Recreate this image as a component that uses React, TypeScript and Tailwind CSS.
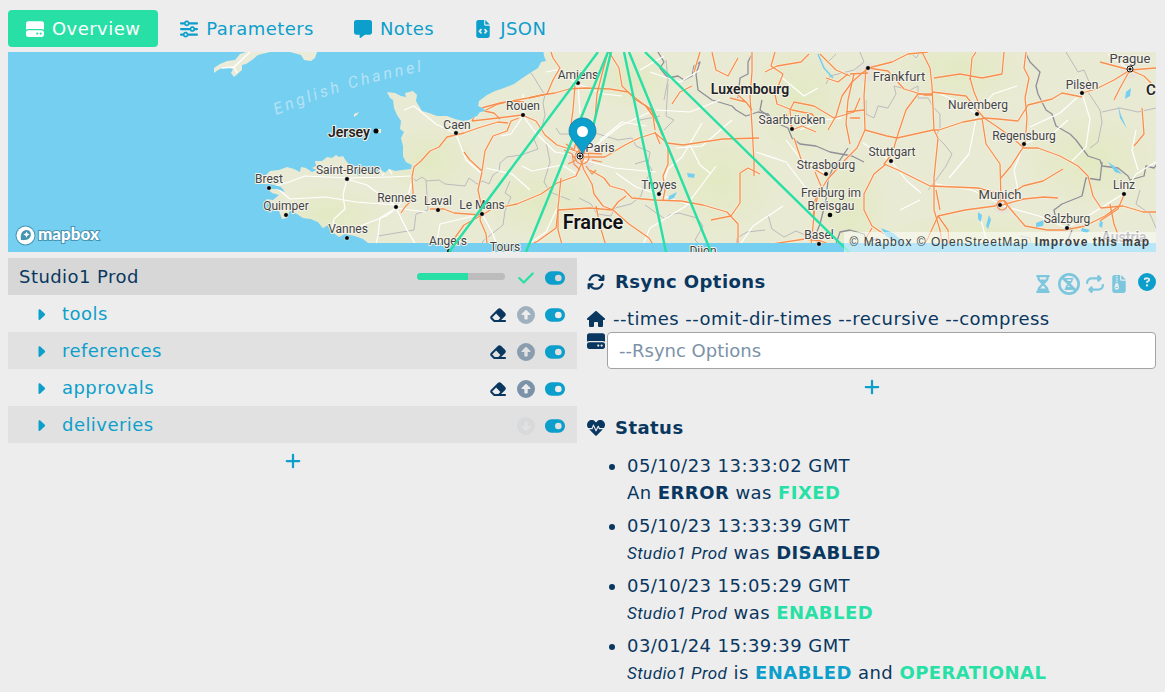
import { ReactNode } from "react";
import { FaHeartbeat } from "react-icons/fa";
import {
  FaArrowsRotate,
  FaBan,
  FaCheck,
  FaCircleDown,
  FaCircleQuestion,
  FaCircleUp,
  FaEraser,
  FaFileCode,
  FaFileZipper,
  FaHardDrive,
  FaHourglassHalf,
  FaHouse,
  FaMessage,
  FaPlus,
  FaRepeat,
  FaSliders,
  FaToggleOn,
} from "react-icons/fa6";

const TABS = [
  { label: "Overview", icon: <FaHardDrive size={18} />, active: true },
  { label: "Parameters", icon: <FaSliders size={18} /> },
  { label: "Notes", icon: <FaMessage size={18} /> },
  { label: "JSON", icon: <FaFileCode size={18} /> },
];

const FOLDERS = [
  { name: "tools", tone: "text-[#9fb0be]", erasable: true },
  { name: "references", tone: "text-[#8a9dae]", erasable: true },
  { name: "approvals", tone: "text-[#7b92a8]", erasable: true },
  { name: "deliveries", tone: "text-[#d8d9da]", erasable: false },
];

const LAND =
  "M1160 48H543l1 8 2 5-5 1-3 6-8 5-9 6-7 5-10 4-9 3-8 4-8 6-1 5 5 2 3 3-6 1-3 4-8 4-6 1-8-2-8-3-10 0-8-3-7-2-3-5-3-5 1-6-4-4-4 1-4 1 1 4-5-1-6-3-8-1 3 6 3 2 1 8 3 7 4 6-1 8 4 3-3 6 2 8 0 10 3 6 6 3-1 4-8 1-8 1-6-2-4 4-5-4-4 5-6-1-7-1-4 4-5-5-4-6-4-4-3-5-4 1-3-2-4 3-5-1-5 4-7 0 1 5-4 2 5 2-5 2-6-4-5-1-1 5-6-3-7-2-8 3-9 1-4 4-5 2-1 7 8 0 7 1 6 2 4 5-8-3-9 0 4 4 7 2-6 5-7-1 3 4 4 6 6 2 3 8 5-1 3-8 7 4 6 4 8 1 7 3 5 6 5-3 3 6 8 6 6-3 10 2 8 3 5 4H1160z";

// motorways, drawn with a light casing under the orange
const MOTORWAYS = [
  "M551 52l2 6 7 10-7 12-6 14-19 4-28 5-22 6-6 12 26-3 24-3 14 6 9 14 12 10 25 8 20 1",
  "M529 98l13-3 13-2 14-4 16-1 25 1 18 3 10 8 13 10 7 15 4 10",
  "M575 86l-2 24-3 22 6 12 6 12",
  "M608 52l-6 22-5 20-2 24-7 24-5 14",
  "M609 52l10 16 3 18 14 14 18 11",
  "M484 111l14-7 14-3 12 1M484 111l10 2 6 6",
  "M412 177l2-10 7-6 9-10 9-4 8-10 17-4 14-5 20-6 10 1",
  "M412 177l1 14 0 8-8 8-4 6",
  "M464 152l6 8 12 11 3-20 8-15 14-5 4-10 8-3",
  "M482 172l-4 18 4 18-2 12 6 14 2 18",
  "M430 209l14 0 10 4 28 2M482 215l10-6 25-5 24-10 16-11 19-7 8-18",
  "M482 215l-18 10-10 14-5 13",
  "M561 178l-3 30 0 22 6 22",
  "M520 250l18-9 18-13 2-18",
  "M580 158l4 12 8 14 2 10 9 12 10 4 16 14 20 14 10 16",
  "M590 170l14 8 6 8 14 4 8 8 22 2 27 1 22 4 10 3 14 4 11 12 0 28",
  "M558 210l32-2 22 2M612 210l6-8 8-6M596 206l4 20 6 20 2 6",
  "M583 157l22 0 20-12 14-7 16-5 12 10 16 2 40-6 36-1",
  "M668 146l0 18-5 12 2 14-2 10",
  "M655 130l-2-14-8-11M660 144l-5-12",
  "M711 220l20-4 9-13 0-30 8-5 12 6",
  "M752 52l0 20-2 24 2 30 2 36 0 14",
  "M752 110l-6-8-16-14M746 102l-16-4",
  "M775 52l-4 14 12 8-8 20 2 10 15 6 20 4 6 8",
  "M765 72l12-6 24-4 8-8M692 86l-12 6-8 12",
  "M712 52l4 18 12 6 10-18M700 52l-6 20",
  "M792 130l-2-20 4-8 20 4 20 12 20-6 6-14",
  "M792 130l10-4 14 6M786 114l6 14",
  "M868 68l-16 14-10 14-6 20-8 14",
  "M866 68l-2 28 1 34-8 18-12 12-18 20-12 20-2 18",
  "M850 76l-14-6-16-16M848 74l-10 8-12-4M850 74l18-1",
  "M854 74l-6 26-2 24 4 20M846 112l18-2M850 118l10 0",
  "M868 68l20 3 16 18 20 6 8 0",
  "M868 68l24-6 16-8 20-2",
  "M922 52l8 16 2 18 2 44 4 8-4 40 0 32 6 20 4 28",
  "M865 130l22 6 10 2 36-8 6 0 24-8 22-4",
  "M898 134l8-24 12-16 14 0",
  "M898 134l-6 20-8 10 14 6 20 10 12 6 48 2 22 6",
  "M886 164l-12 10-10 20 0 16 8 16 12 8",
  "M934 78l26-4 22 4 20-4 2-22M970 80l2-22 4-6",
  "M932 92l34 4 8 10 10 12M970 78l4 14 6 14",
  "M982 118l4 26 14 20 1 36",
  "M984 118l14 1 20 2 10-16 24-6 10-6 20 4",
  "M984 118l12 8 14 10 14 12 14 0 22 8 18 10 10 10 5 20 8 12 22-2 20 6 22 0",
  "M1026 52l-2 16 5 10-4 20 2 20-2 26",
  "M1003 200l-8 6-30 4-27 6-10 22-8 14",
  "M938 216l10 14 2 22M940 210l-4-20",
  "M1003 200l10 12 12 14 22 4 18 0 20-4 20-10 14-10",
  "M1003 200l20-14 20-5 20-12",
  "M1001 178l10-12 13-20",
  "M1002 205l22-6 20-2 14 1",
  "M1082 93l14-4 18-9 16-10",
  "M1130 70l-10 18-6 12",
  "M1130 70l14 6 12 12M1130 70l-30-8M1130 70l26-2",
  "M1142 108l2 26-10 12",
  "M1110 204l4 20 6 16 2 12",
  "M1124 195l-6 14-18 12",
  "M872 228l-8 14M815 172l6 14-6 20-4 40",
  "M765 245l40-6 16 2 20 8",
  "M826 176l-24-14-8-24",
];

// minor white roads
const ROADS = [
  "M271 187l18-5 16-6 44 2 40-1 22-1",
  "M278 189l12 10 36-2 30 5 40 3",
  "M286 216l20 6 20 8 24 0 36-14 12-9",
  "M347 179l20 6 16 12 14 10M347 179l-4 16 2 14-11 10-2 10",
  "M396 208l-16 10-2 18-4 15M396 208l10 20 14 24M396 208l30 4",
  "M396 208l12-12 4-16M456 134l-20-10-22-18-10 4",
  "M456 134l10 26 16 14M382 176l6-8 4 6",
  "M523 116l-12 18-10 2M523 116l12 16 20 20 24 4M523 116v-22",
  "M578 84l-22-14-10 2M578 84l26 10 18 2M578 84l2 30",
  "M600 140l22-18 24 4M590 150l30-24 30-14M584 160l30 8 42 4",
  "M660 195l-24-8-20-14M660 195l8-26 14-12 20-34M660 195l30 10",
  "M578 175l-16-10-30 6-10-5M530 190l-18-16-26-6",
  "M640 252l10-24 36-22 30-40M735 252l18-26 30-20",
  "M690 145l10 20 10 8M732 120l-30 26-26 2",
  "M826 174l-26-16-14-18M891 161l-16-10-12-8M891 161l16 20 14 12",
  "M977 114l-22-14-20-8M977 114l16-20 24-8M977 114l-8 40-20 24",
  "M1024 144l-10 26 4 20M1024 144l28-10 16-14M1000 204l-28-14-36-6",
  "M1082 93l8 26-4 28-14 14M1082 93l-22 20-30 14M1130 70l-22-16",
  "M1124 194l12-20 20-12M1067 228l24-14 32-20M1067 228l-28-12-36-10",
  "M500 252l-8-20-10-18-42 10-4 22M520 250l26-18 14-30",
  "M700 70l-20 12-30-10M720 100l-30 12-34-2M640 70l24-14",
  "M780 76l24 20 14-8M800 130l24-10 18-2M900 210l20-10M980 216l8 30",
  "M756 152l30 10 20 26M1136 130l-4 20 6 20",
];

// département, Land and country borders
const BORDERS = [
  "M412 177l4 4 6-4 5 4 12-1 6 4 20 2 4-8 8 6 6-3 6 3 4-9 6-4 1-8 7-6 14-2 17-6-4-10 4-8 4-4 3-12-2-12 2-8-4-6-6-10-4-6-8-4",
  "M510 181l-5 12 6 4-6 14-2 14-20 16-3 11",
  "M556 128l4 6 14 0 10-8 8 6 26 8 14-2 4 8 14 6-2 12 4 6-8 14-3 12-10 8-16 4-4 8-14-2-6-10-12-6",
  "M546 142l4 20-6 20 6 10 20 8",
  "M426 180l2 30-12 4-2 16-36 6",
  "M635 164l13-4M640 120l20-4M664 100l4-20-2-20M668 84l-2 32 8 4-10 10",
  "M645 205l20 14 4-4 10-2 18 5 6 8-8 14 10 10M735 252l2-14 10-6 18-2",
  "M860 52l4 10-10 8-24 6-4 8M866 100l0 14 8 4 4-12 10 2 8-14-2-8 16 4 8-4 0 12 10 0 6 10 6 6 0 14-4 8 8 8 8 10-6 12-10 14-8 10",
  "M828 62l8-8M920 52l-4 6-4-4M1066 52l12 20 6-2 6 14-2 8 12 18 2 12-4 20-8 6",
  "M1102 112l18-4 18 4 18-4M1140 190l-4 14 14 10 6 14",
  "M768 215l4 14 12 8 12-6 14 6M1020 236l10 2 2 14",
];

const COUNTRY_BORDERS = [
  "M658 52l6 10-4 6 8 10 10-2 6 4 8-4 2-10 6-4-4 12 2 16 14 10 20 6 4 4 10 6 12-4 10 2 6 8 14 6 4 10 8 6 16 2 14 6 22 4 12 6",
  "M738 98l2-20 8-4 0-12 4-8M768 116l-8-6 2-10",
  "M848 148l-8 12-8 10-4 10-2 20-6 24-4 10 2 12 8 4",
  "M1026 54l4 8 10 10-4 14 2 8 8 16 6 4 4 12 14 8 6 6 12 16 12 4 2 6 16 2 10 8 2 4 14-4 2-10 8 2 6-8",
  "M1102 162l-2 18-14-2-4 18-20 8-8 6 2 10 12 4 4 6-4 10 4 12",
  "M836 244l4-12 10-2 14 4 4 8 10-4",
];

const ROUTES = ["M598 52L449 252", "M608 52L526 252", "M611 52L590 140", "M624 52L666 252", "M629 52L711 252", "M645 52L849 252"];

const CITIES: { name: string; x: number; y: number; dx: number; dy: number; size?: number }[] = [
  { name: "Brest", x: 269, y: 188, dx: 269, dy: 183 },
  { name: "Quimper", x: 286, y: 215, dx: 286, dy: 210 },
  { name: "Saint-Brieuc", x: 347, y: 179, dx: 348, dy: 174 },
  { name: "Vannes", x: 347, y: 238, dx: 348, dy: 233 },
  { name: "Rennes", x: 396, y: 207, dx: 397, dy: 202 },
  { name: "Laval", x: 438, y: 210, dx: 438, dy: 205 },
  { name: "Le Mans", x: 482, y: 214, dx: 482, dy: 209 },
  { name: "Angers", x: 449, y: 251, dx: 448, dy: 245 },
  { name: "Caen", x: 456, y: 133, dx: 457, dy: 129 },
  { name: "Rouen", x: 523, y: 115, dx: 523, dy: 110 },
  { name: "Amiens", x: 578, y: 83, dx: 578, dy: 79 },
  { name: "Troyes", x: 659, y: 194, dx: 659, dy: 189 },
  { name: "Saarbrücken", x: 792, y: 129, dx: 792, dy: 124 },
  { name: "Strasbourg", x: 826, y: 174, dx: 826, dy: 169 },
  { name: "Stuttgart", x: 891, y: 161, dx: 892, dy: 156 },
  { name: "Basel", x: 819, y: 244, dx: 819, dy: 239 },
  { name: "Frankfurt", x: 868, y: 68, dx: 899, dy: 81, size: 13 },
  { name: "Nuremberg", x: 977, y: 114, dx: 978, dy: 109 },
  { name: "Regensburg", x: 1024, y: 144, dx: 1024, dy: 140 },
  { name: "Munich", x: 1000, y: 205, dx: 1000, dy: 199, size: 13 },
  { name: "Salzburg", x: 1067, y: 228, dx: 1067, dy: 223 },
  { name: "Linz", x: 1124, y: 194, dx: 1124, dy: 189 },
  { name: "Pilsen", x: 1082, y: 93, dx: 1082, dy: 89 },
];

interface HaloProps {
  x: number;
  y: number;
  size: number;
  bold?: boolean;
  fill?: string;
  children: ReactNode;
}

function Halo({ x, y, size, bold, fill = "#444", children }: HaloProps) {
  return (
    <text
      x={x}
      y={y}
      fontSize={size}
      fontWeight={bold ? 600 : 400}
      textAnchor="middle"
      fill={fill}
      stroke="#f4f3ea"
      strokeWidth={2}
      strokeLinejoin="round"
      paintOrder="stroke"
      className="tracking-normal"
    >
      {children}
    </text>
  );
}

function RouteMap() {
  return (
    <div className="relative h-[200px] overflow-hidden bg-[#75cff0]">
      <svg
        className="h-full w-full"
        viewBox="8 52 1148 200"
        preserveAspectRatio="xMidYMid slice"
        fontFamily="Roboto, 'Noto Sans', sans-serif"
        role="img"
        aria-label="Route map"
      >
        <defs>
          <clipPath id="land">
            <path d={LAND} />
          </clipPath>
          <radialGradient id="park">
            <stop offset="0" stopColor="#e2e9c2" />
            <stop offset="1" stopColor="#e2e9c2" stopOpacity="0" />
          </radialGradient>
        </defs>
        <g clipPath="url(#land)">
          <rect x="0" y="48" width="1170" height="210" fill="#e9ead3" />
          <g fill="url(#park)">
            <ellipse cx="330" cy="215" rx="60" ry="30" />
            <ellipse cx="430" cy="160" rx="50" ry="36" />
            <ellipse cx="540" cy="200" rx="60" ry="40" />
            <ellipse cx="630" cy="80" rx="50" ry="30" />
            <ellipse cx="720" cy="180" rx="60" ry="60" />
            <ellipse cx="800" cy="100" rx="50" ry="60" />
            <ellipse cx="850" cy="210" rx="40" ry="60" />
            <ellipse cx="960" cy="70" rx="70" ry="40" />
            <ellipse cx="1090" cy="160" rx="70" ry="50" />
            <ellipse cx="970" cy="240" rx="90" ry="30" />
          </g>
          <g fill="#e6e3d8">
            <circle cx="582" cy="157" r="14" />
            <circle cx="866" cy="72" r="10" />
            <circle cx="1130" cy="70" r="9" />
            <circle cx="1002" cy="204" r="10" />
          </g>
          <g fill="none" strokeLinejoin="round">
            <g stroke="#bcbabd" strokeWidth={1}>
              {BORDERS.map((d) => <path key={d} d={d} />)}
            </g>
            <g stroke="#908e98" strokeWidth={1.3}>
              {COUNTRY_BORDERS.map((d) => <path key={d} d={d} />)}
            </g>
            <g stroke="#fff" strokeWidth={1.2}>
              {ROADS.map((d) => <path key={d} d={d} />)}
            </g>
            <g stroke="#fcefdc" strokeWidth={2.6}>
              {MOTORWAYS.map((d) => <path key={d} d={d} />)}
            </g>
            <g stroke="#f58f50" strokeWidth={1.3}>
              {MOTORWAYS.map((d) => <path key={d} d={d} />)}
            </g>
            <g stroke="#f58f50" strokeWidth={1.2}>
              <circle cx="582" cy="157" r="7" />
              <path d="M564 150l8 4 4 6-8 4M572 154l2 10 6 6M566 144l8 6 2-8M592 160l10 2M586 166l6 8 4-4" />
              <circle cx="1002" cy="205" r="5" />
            </g>
          </g>
          <g fill="#75cff0">
            <path d="M687 173l8 1-1 4-6-1zM669 196l8-4-3 6-6 2zM978 212l4 3-1 7-3-3zM989 215l2 5-3 9-2-3zM1036 223l8-3-1 6-7 1zM881 228l12 5 14 12-9-2-12-7zM1108 162l6 4 8 8-7-2zM1126 92l5-4-1 8-5 3zM1118 105l3 10 6 14-7-11zM1100 221l3 1-1 6-3-2zM1082 228l8 2-3 3-6-2z" />
          </g>
          <path d="M818 54l6 14 9 10" fill="none" stroke="#75cff0" strokeWidth={1.5} />
        </g>
        <path
          d="M246 52h24l-12 3-6 5-6 4-4 1 0 5-8 7-3-4 2-4-8-2-7 3-4 3 0-5 6-4 7-3 8-1 5-6zM290 52h27l-2 6-4 3-7-1-3-5zM354 114l5-2-2 3-3 2zM376 129h5v4h-5z"
          fill="#ebebd9"
        />
        <path d="M250 52l-16 15-12 1M234 67l3 6" fill="none" stroke="#fff" strokeWidth={1.3} />

        <path id="channel" d="M276 115Q350 84 430 70" fill="none" />
        <text fontSize={16} fontStyle="italic" fill="#b5e2f6" className="tracking-[3px]">
          <textPath href="#channel">English Channel</textPath>
        </text>

        {CITIES.map((c) => (
          <g key={c.name}>
            <Halo x={c.dx} y={c.dy} size={c.size ?? 12}>{c.name}</Halo>
            <circle cx={c.x} cy={c.y} r={2.3} fill="#000" stroke="#fff" strokeWidth={0.5} />
          </g>
        ))}
        <Halo x={831} y={197} size={12}>Freiburg im</Halo>
        <Halo x={831} y={210} size={12}>Breisgau</Halo>
        <circle cx={830} cy={215} r={2.3} />
        <Halo x={505} y={251} size={12}>Tours</Halo>
        <Halo x={703} y={255} size={12}>Dijon</Halo>
        <Halo x={600} y={152} size={13}>Paris</Halo>
        <Halo x={1130} y={63} size={13}>Prague</Halo>
        <Halo x={349} y={137} size={14} bold fill="#222">Jersey</Halo>
        <circle cx={376} cy={131} r={2.5} />
        <Halo x={750} y={94} size={14} bold fill="#222">Luxembourg</Halo>
        <Halo x={593} y={229} size={20} bold fill="#111">France</Halo>
        <Halo x={1151} y={95} size={15} bold fill="#222">C</Halo>
        <Halo x={1124} y={242} size={14} bold fill="#8b8b91">Austria</Halo>
        {[[580, 156], [1130, 69]].map(([x, y]) => (
          <g key={x}>
            <circle cx={x} cy={y} r={3} fill="#fff" stroke="#111" />
            <circle cx={x} cy={y} r={1.6} fill="#111" />
          </g>
        ))}

        <g stroke="#28e0a6" strokeWidth={2.4} fill="none">
          {ROUTES.map((d) => <path key={d} d={d} />)}
        </g>
        <path
          d="M582.500 118c-7.500 0-13.500 5.800-13.500 13.200 0 8.300 8.600 11.600 13.500 22.800 4.900-11.200 13.500-14.500 13.500-22.800 0-7.400-6-13.200-13.500-13.200z"
          fill="#0d9fcb"
          stroke="#0b82ad"
          strokeWidth={0.8}
        />
        <circle cx={582.5} cy={131.5} r={5.5} fill="#fff" />
      </svg>

      <a href="#mapbox" aria-label="Mapbox" className="absolute bottom-1 left-1.5">
        <svg width="90" height="26" viewBox="0 0 90 26">
          <circle cx="11.500" cy="13.500" r="10" fill="#4594b2" />
          <circle cx="11.500" cy="13.500" r="9" fill="#fff" />
          <path d="M7 18c-.7-5 .2-9 5-10 4-.4 6 3.500 4.300 6.700C14.600 18 11 18.300 7 18z" fill="#4594b2" />
          <path d="M12.500 9.500l1 2 2.200 1-2.200 1-1 2.200-1-2.200-2.200-1 2.200-1z" fill="#fff" />
          <text
            x="24"
            y="18"
            fontFamily="Lato, sans-serif"
            fontSize="17"
            fontWeight="900"
            fill="#fff"
            stroke="#4594b2"
            strokeWidth="2"
            paintOrder="stroke"
            className="tracking-normal"
          >
            mapbox
          </text>
        </svg>
      </a>
      <div className="absolute right-0 bottom-0 flex h-5 items-center gap-1.5 bg-white/50 px-1.5 font-['Liberation_Sans',Arial,sans-serif] text-[12px] tracking-[1px] whitespace-nowrap text-[#404040]">
        <span>
          <a href="#about">© Mapbox</a> <a href="#osm">© OpenStreetMap</a>
        </span>
        <a href="#improve" className="font-bold">Improve this map</a>
      </div>
    </div>
  );
}

function Toggle({ label }: { label: string }) {
  return (
    <button type="button" role="switch" aria-checked="true" aria-label={label} className="pt-0.5 text-[#0d9fcb]">
      <FaToggleOn size={20} />
    </button>
  );
}

function FolderList() {
  return (
    <section>
      <div className="flex h-[37px] items-center bg-[#d7d7d7] pr-3 pl-[11px]">
        <h2 className="flex-1">Studio1 Prod</h2>
        <div className="mr-3 h-[7px] w-[88px] overflow-hidden rounded-full bg-[#bcbcbc]">
          <div className="h-full w-[58%] bg-[#28e0a6]" />
        </div>
        <span className="mr-2.5 pt-0.5 text-[#28e0a6]">
          <FaCheck size={18} />
        </span>
        <Toggle label="Enable Studio1 Prod" />
      </div>
      <ul className="text-[#0d9fcb]">
        {FOLDERS.map((f) => (
          <li key={f.name} className="flex h-[37px] items-center pr-3 pl-[29px] even:bg-[#e1e1e1]">
            <button type="button" className="flex flex-1 items-center gap-4">
              <svg width="9" height="14" viewBox="0 0 9 14" fill="currentColor">
                <path d="M1.500 3.500c0-1.200 1-1.600 1.800-.9l4.300 4c.7.700.7 1.400 0 2l-4.300 4c-.8.700-1.800.300-1.800-.9z" />
              </svg>
              {f.name}
            </button>
            {f.erasable && (
              <button type="button" aria-label={`Clear ${f.name}`} className="mr-2.5 pt-0.5 text-[#09375f]">
                <FaEraser size={18} />
              </button>
            )}
            <button type="button" aria-label={`Sync ${f.name}`} className={`mr-2.5 pt-0.5 ${f.tone}`}>
              {f.erasable ? <FaCircleUp size={18} /> : <FaCircleDown size={18} />}
            </button>
            <Toggle label={`Enable ${f.name}`} />
          </li>
        ))}
      </ul>
      <button type="button" aria-label="Add folder" className="flex h-9 w-full items-center justify-center text-[#0d9fcb]">
        <FaPlus size={18} />
      </button>
    </section>
  );
}

function StatusItem({ time, children }: { time: string; children: ReactNode }) {
  return (
    <li className="mb-[6px] leading-[27px]">
      <p>{time}</p>
      <p>{children}</p>
    </li>
  );
}

function Site() {
  return <em className="font-[Roboto,sans-serif] text-[17px] leading-none">Studio1 Prod</em>;
}

export default function App() {
  return (
    <main className="min-h-screen bg-[#ededed] pt-2.5 pr-[9px] pl-2 font-['DejaVu_Sans',sans-serif] text-[18px] leading-[27px] tracking-wide text-[#09375f]">
      <nav className="mb-[5px] flex gap-1 text-[#0d9fcb]">
        {TABS.map((t) => (
          <button
            key={t.label}
            type="button"
            className={`flex h-[37px] items-center gap-2 rounded px-[18px] ${t.active ? "bg-[#28e0a6] text-white" : ""}`}
          >
            {t.icon}
            {t.label}
          </button>
        ))}
      </nav>
      <RouteMap />
      <div className="mt-1.5 grid grid-cols-2 gap-2.5">
        <FolderList />
        <section className="pt-2.5">
          <div className="flex items-center">
            <FaArrowsRotate size={18} className="mr-2.5" />
            <h2 className="flex-1 font-bold">Rsync Options</h2>
            <div className="flex h-[27px] items-center gap-1.5 text-[#7dc7de]">
              <div className="flex items-center gap-1 pt-1">
                <FaHourglassHalf size={18} />
                <span className="relative mx-0.5 flex size-[22px] items-center justify-center">
                  <FaBan size={22} className="absolute" />
                  <FaHourglassHalf size={12} />
                </span>
                <FaRepeat size={18} />
                <FaFileZipper size={18} className="ml-0.5" />
              </div>
              <button type="button" aria-label="Rsync help" className="ml-1 text-[#0d9fcb]">
                <FaCircleQuestion size={18} />
              </button>
            </div>
          </div>
          <p className="mt-2.5 flex items-center gap-2">
            <FaHouse size={18} />
            --times --omit-dir-times --recursive --compress
          </p>
          <div className="flex gap-0.5">
            <FaHardDrive size={18} />
            <input
              aria-label="Rsync Options"
              placeholder="--Rsync Options"
              className="h-[37px] min-w-0 flex-1 rounded border border-[#a3a3a3] bg-white px-[11px] tracking-normal placeholder:text-[#7b92a8]"
            />
          </div>
          <button type="button" aria-label="Add option" className="flex h-9 w-full items-center justify-center text-[#0d9fcb]">
            <FaPlus size={18} />
          </button>
          <h2 className="mt-[9px] flex items-center gap-2.5 font-bold">
            <FaHeartbeat size={18} />
            Status
          </h2>
          <ul className="mt-[11px] list-disc pl-10">
            <StatusItem time="05/10/23 13:33:02 GMT">
              An <b>ERROR</b> was <b className="text-[#28e0a6]">FIXED</b>
            </StatusItem>
            <StatusItem time="05/10/23 13:33:39 GMT">
              <Site /> was <b>DISABLED</b>
            </StatusItem>
            <StatusItem time="05/10/23 15:05:29 GMT">
              <Site /> was <b className="text-[#28e0a6]">ENABLED</b>
            </StatusItem>
            <StatusItem time="03/01/24 15:39:39 GMT">
              <Site /> is <b className="text-[#0d9fcb]">ENABLED</b> and <b className="text-[#28e0a6]">OPERATIONAL</b>
            </StatusItem>
          </ul>
        </section>
      </div>
    </main>
  );
}
